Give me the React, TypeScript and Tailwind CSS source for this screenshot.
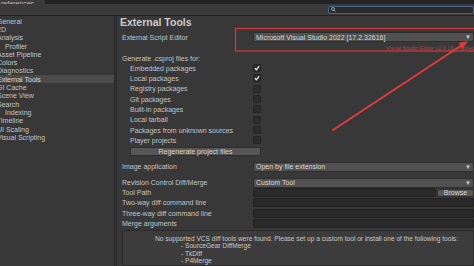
import React from "react";

// ---------------------------------------------------------------------------
// Data
// ---------------------------------------------------------------------------
const NAV = [
  { label: "General" },
  { label: "2D" },
  { label: "Analysis" },
  { label: "Profiler", indent: true },
  { label: "Asset Pipeline" },
  { label: "Colors" },
  { label: "Diagnostics" },
  { label: "External Tools", selected: true },
  { label: "GI Cache" },
  { label: "Scene View" },
  { label: "Search" },
  { label: "Indexing", indent: true },
  { label: "Timeline" },
  { label: "UI Scaling" },
  { label: "Visual Scripting" },
];

const PACKAGES = [
  { label: "Embedded packages", checked: true },
  { label: "Local packages", checked: true },
  { label: "Registry packages" },
  { label: "Git packages" },
  { label: "Built-in packages" },
  { label: "Local tarball" },
  { label: "Packages from unknown sources" },
  { label: "Player projects" },
];

// ---------------------------------------------------------------------------
// Small controls
// ---------------------------------------------------------------------------
function Dropdown({ value }: { value: string }) {
  return (
    <div className="flex h-[10px] flex-1 items-center justify-between rounded-[2px] border border-[#2e2e2e] bg-[#515151] pl-[2px] pr-[2px] text-[#d8d8d8]">
      <span className="whitespace-nowrap">{value}</span>
      <span className="text-[6px] leading-none text-[#cfcfcf]">▼</span>
    </div>
  );
}

function Field() {
  return <div className="h-[9px] flex-1 rounded-[2px] border border-[#212121] bg-[#2a2a2a]" />;
}

function Checkbox({ checked }: { checked?: boolean }) {
  return (
    <div className="flex h-[8px] w-[8px] items-center justify-center rounded-[1px] border border-[#242424] bg-[#2c2c2c]">
      {checked && (
        <svg width="6" height="6" viewBox="0 0 10 10" fill="none" stroke="#e8e8e8" strokeWidth="2.2">
          <polyline points="1.5,5.5 4,8 8.5,2" />
        </svg>
      )}
    </div>
  );
}

function Row({ label, children, h = "h-[10.4px]" }: { label: string; children?: React.ReactNode; h?: string }) {
  return (
    <div className={`flex ${h} items-center`}>
      <div className="w-[131px] shrink-0 whitespace-nowrap">{label}</div>
      <div className="flex flex-1 items-center">{children}</div>
    </div>
  );
}

// ---------------------------------------------------------------------------
// App
// ---------------------------------------------------------------------------
export default function App() {
  return (
    <div
      className="relative h-[266px] w-[474px] overflow-hidden bg-[#383838] text-[7px] leading-none text-[#c4c4c4]"
      style={{ fontFamily: '"Liberation Sans", Arial, sans-serif' }}
    >
      {/* Window tab strip */}
      <div className="flex h-[4px] bg-[#232323]">
        <div className="flex w-[45px] items-end overflow-hidden bg-[#3b3b3b] pl-[1px]">
          <span className="-mb-[3px] text-[7px] text-[#bdbdbd]">references</span>
        </div>
      </div>

      {/* Toolbar with search */}
      <div className="flex h-[12px] items-center justify-end border-b border-[#232323] bg-[#3a3a3a]">
        <div className="flex h-[8px] w-[146px] items-center rounded-[2px] border border-[#44668e] bg-[#2a2a2a] pl-[2px]">
          <svg width="5" height="5" viewBox="0 0 10 10" fill="none" stroke="#bdbdbd" strokeWidth="1.6">
            <circle cx="4" cy="4" r="3" />
            <line x1="6.3" y1="6.3" x2="9" y2="9" />
          </svg>
        </div>
      </div>

      <div className="flex h-[250px]">
        {/* Left navigation */}
        <div className="w-[114px] shrink-0 overflow-hidden bg-[#383838] pt-[1px]">
          {NAV.map((n) => (
            <div
              key={n.label}
              className={`flex h-[8.3px] items-center whitespace-nowrap ${
                n.selected ? "bg-[#4b4b4b] text-[#d6d6d6]" : ""
              } ${n.indent ? "pl-[5px]" : "-ml-[3px]"}`}
            >
              {n.label}
            </div>
          ))}
        </div>
        <div className="w-[3px] shrink-0 bg-[#2d2d2d]" />

        {/* Right content */}
        <div className="flex min-w-0 flex-1 flex-col pl-[5px]">
          <div className="flex h-[13px] items-center -ml-[2px] text-[10.5px] font-bold text-[#cccccc]">
            External Tools
          </div>
          <div className="mt-[3px]">
            <Row label="External Script Editor" h="h-[11px]">
              <Dropdown value="Microsoft Visual Studio 2022 [17.2.32616]" />
            </Row>
          </div>
          <div className="flex h-[11px] items-center pl-[264px] whitespace-nowrap text-[5.5px] text-[#a8494c]">
            Visual Studio Editor v2.0.16 enabled
          </div>
          <div className="flex h-[9px] items-center">Generate .csproj files for:</div>
          {PACKAGES.map((p) => (
            <div key={p.label} className="flex h-[10.4px] items-center">
              <div className="w-[131px] shrink-0 whitespace-nowrap pl-[8px]">{p.label}</div>
              <Checkbox checked={p.checked} />
            </div>
          ))}
          <div className="mt-[1px] flex h-[9px] items-center pl-[8px]">
            <div className="flex h-[9px] w-[131px] items-center justify-center rounded-[2px] border border-[#2e2e2e] bg-[#565656] text-[#d2d2d2]">
              Regenerate project files
            </div>
          </div>
          <div className="mt-[6px]">
            <Row label="Image application" h="h-[10px]">
              <Dropdown value="Open by file extension" />
            </Row>
          </div>
          <div className="mt-[6px]">
            <Row label="Revision Control Diff/Merge" h="h-[10px]">
              <Dropdown value="Custom Tool" />
            </Row>
          </div>
          <Row label="Tool Path" h="h-[10px]">
            <Field />
            <div className="ml-[1px] flex h-[8px] w-[37px] items-center justify-center rounded-[2px] border border-[#2e2e2e] bg-[#585858] text-[#d2d2d2]">
              Browse
            </div>
          </Row>
          <Row label="Two-way diff command line">
            <Field />
          </Row>
          <Row label="Three-way diff command line">
            <Field />
          </Row>
          <Row label="Merge arguments">
            <Field />
          </Row>
          <div className="mt-[1px] flex-1 rounded-[2px] border border-[#2a2a2a] bg-[#3c3c3c] pl-[32px] pt-[4px] text-[6.6px] leading-[7.6px] text-[#c8c8c8]">
            <div className="whitespace-nowrap">
              No supported VCS diff tools were found. Please set up a custom tool or install one of the following tools:
            </div>
            <div className="pl-[26px]">- SourceGear DiffMerge</div>
            <div className="pl-[26px]">- TkDiff</div>
            <div className="pl-[26px]">- P4Merge</div>
          </div>
        </div>
      </div>

      {/* Red annotation drawn on top of the screenshot */}
      <svg className="pointer-events-none absolute inset-0" width="474" height="266" viewBox="0 0 474 266">
        <rect x="235.5" y="28.5" width="250" height="22.5" fill="none" stroke="#d9383c" strokeWidth="1.2" />
        <line x1="333" y1="130" x2="460.5" y2="46" stroke="#e23a3d" strokeWidth="2" strokeLinecap="round" />
        <polygon points="468,41 462.4,48.9 458.6,43" fill="#e23a3d" />
      </svg>
    </div>
  );
}
